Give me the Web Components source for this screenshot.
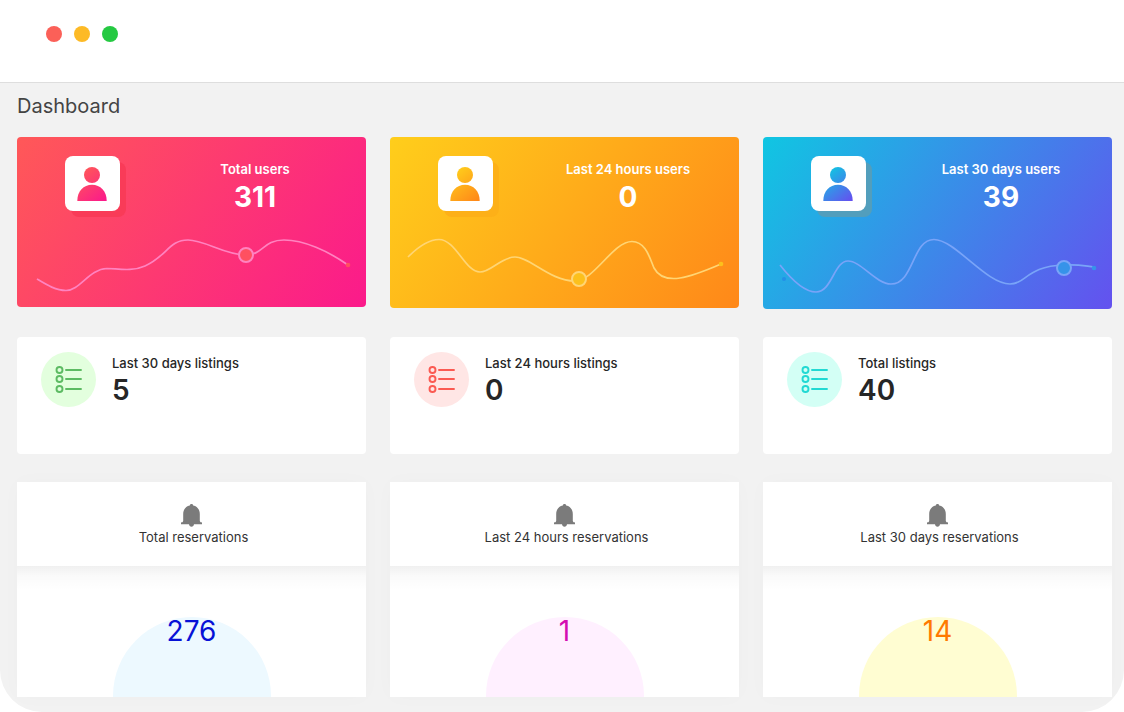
<!DOCTYPE html>
<html lang="en">
<head>
<meta charset="utf-8">
<meta name="viewport" content="width=device-width, initial-scale=1">
<title>Dashboard</title>
<style>
  html { background: #fff; }
  body { margin: 0; font-family: Inter, "Liberation Sans", sans-serif; font-size: 13px; line-height: 20px; color: #262626; }
</style>
</head>
<body>
<window-frame>
  <dash-board heading="Dashboard">
    <user-card tone="red" label="Total users" value="311"></user-card>
    <user-card tone="amber" label="Last 24 hours users" value="0"></user-card>
    <user-card tone="blue" label="Last 30 days users" value="39"></user-card>
    <listing-card tone="green" label="Last 30 days listings" value="5"></listing-card>
    <listing-card tone="red" label="Last 24 hours listings" value="0"></listing-card>
    <listing-card tone="teal" label="Total listings" value="40"></listing-card>
    <reservation-card tone="blue" label="Total reservations" value="276"></reservation-card>
    <reservation-card tone="pink" label="Last 24 hours reservations" value="1"></reservation-card>
    <reservation-card tone="yellow" label="Last 30 days reservations" value="14"></reservation-card>
  </dash-board>
</window-frame>

<script>
class BaseElement extends HTMLElement {
  connectedCallback() {
    if (!this.shadowRoot) this.attachShadow({ mode: "open" }).innerHTML = this.render();
  }
  attr(name) { return this.getAttribute(name) || ""; }
}

customElements.define("window-frame", class extends BaseElement {
  render() {
    return `
    <style>
      :host { display: block; background: #f2f2f2; border-radius: 0 0 42px 42px; overflow: hidden; }
      header { display: flex; gap: 12px; height: 83px; padding: 26px 46px; box-sizing: border-box;
               background: #fff; border-bottom: 1px solid #dedede; }
      .dot { width: 16px; height: 16px; border-radius: 50%; }
      .close { background: #fb6058; }
      .min { background: #fdba26; }
      .max { background: #25c942; }
    </style>
    <header><span class="dot close"></span><span class="dot min"></span><span class="dot max"></span></header>
    <slot></slot>`;
  }
});

customElements.define("dash-board", class extends BaseElement {
  render() {
    return `
    <style>
      :host { display: block; padding: 8px 12px 15px 17px; }
      h1 { margin: 0 0 16px; font-size: 20px; line-height: 30px; font-weight: 400; color: #444; }
      main { display: grid; grid-template-columns: repeat(3, minmax(0, 1fr)); gap: 28px 24px; align-items: start; }
    </style>
    <h1>${this.attr("heading")}</h1>
    <main><slot></slot></main>`;
  }
});

const USER_TONES = {
  red: {
    from: "#ff5858", to: "#fb1a8b", shadow: "#f93b58", line: "#ff83c0", dot: "#ff5060", height: 80,
    path: "M20 52C30 58 39 63.500 49 63.500C63 63.500 72 42 90 41.500C100 41.500 115 45 128 39C150 29 152 13 171 13C188 13 207 28 229 28C246 28 246 13 267 13C287 13 311 24 331 38",
    knob: [229, 28], end: [331, 38]
  },
  amber: {
    from: "#ffce1b", to: "#ff8819", shadow: "#fdb018", line: "#ffd574", dot: "#fcc01c", height: 81,
    path: "M18 30C26 22 38 12.500 49 12.500C66 12.500 75 45 90 45C101 45 111 30 125 30C140 30 160 54 185 54C204 54 223 14.500 242 14.500C256 14.500 260 32 264 41C274 60 301 50 331 37",
    knob: [189, 52], end: [331, 37]
  },
  blue: {
    from: "#10c6e2", to: "#6451ef", shadow: "#529ebc", line: "#79a4f8", dot: "#3693e9", height: 82,
    path: "M17 38C28 52 42 65 53 65C69 65 71 34 85 34C98 34 113 57 128 57C151 57 149 12.500 171 12.500C192 12.500 223 57 247 57C263 57 264 39 301 38C315 37 322 39 331 40",
    knob: [301, 41], end: [331, 41]
  }
};

customElements.define("user-card", class extends BaseElement {
  render() {
    const t = USER_TONES[this.attr("tone")];
    const extra = this.attr("tone") === "blue" ? `<circle cx="21" cy="52" r="2" fill="#238fe8"/>` : "";
    return `
    <style>
      :host { display: block; border-radius: 4px; overflow: hidden; color: #fff;
              background: linear-gradient(125deg, ${t.from}, ${t.to}); }
      .top { display: grid; grid-template-columns: 150fr 176fr; padding: 19px 23px 0 0; height: 90px; box-sizing: border-box; }
      .badge { justify-self: center; display: grid; place-items: center; width: 55px; height: 55px;
               border-radius: 8px; background: #fff; box-shadow: 6px 6px 0 ${t.shadow}; }
      .copy { text-align: center; padding-top: 3px; white-space: nowrap; }
      h2 { margin: 0; font-size: 13px; line-height: 20px; font-weight: 600; }
      p { margin: 0; font-size: 28px; line-height: 36px; font-weight: 700; }
      .badge svg { width: 30px; height: 34px; }
      .chart { display: block; width: 100%; height: ${t.height}px; }
    </style>
    <div class="top">
      <div class="badge">
        <svg viewBox="0 0 30 34" aria-hidden="true">
          <defs><linearGradient id="g" gradientUnits="userSpaceOnUse" x1="3" y1="4" x2="27" y2="34">
            <stop stop-color="${t.from}"/><stop offset="1" stop-color="${t.to}"/></linearGradient></defs>
          <circle cx="15" cy="8" r="8" fill="url(#g)"/>
          <path d="M.3 34C.3 24 6.500 17.700 15 17.700S29.700 24 29.700 34Z" fill="url(#g)"/>
        </svg>
      </div>
      <div class="copy"><h2>${this.attr("label")}</h2><p>${this.attr("value")}</p></div>
    </div>
    <svg class="chart" viewBox="0 0 349 ${t.height}" preserveAspectRatio="none" aria-hidden="true">
      <path d="${t.path}" fill="none" stroke="${t.line}" stroke-width="1.700"/>
      ${extra}
      <circle cx="${t.end[0]}" cy="${t.end[1]}" r="2.300" fill="${t.dot}"/>
      <circle cx="${t.knob[0]}" cy="${t.knob[1]}" r="7" fill="${t.dot}" stroke="${t.line}" stroke-width="2"/>
    </svg>`;
  }
});

const LISTING_TONES = {
  green: ["#e3ffde", "#5dbb63"],
  red: ["#ffe6e5", "#fb5a52"],
  teal: ["#d3fff5", "#22d9d3"]
};

customElements.define("listing-card", class extends BaseElement {
  render() {
    const [bg, ink] = LISTING_TONES[this.attr("tone")];
    return `
    <style>
      :host { display: flex; gap: 16px; min-height: 117px; padding: 15px 24px; box-sizing: border-box;
              border-radius: 4px; background: #fff; }
      svg { flex: none; width: 55px; height: 55px; border-radius: 50%; background: ${bg}; }
      h2 { margin: 0; padding-top: 1px; font-size: 13px; line-height: 20px; font-weight: 500; }
      p { margin: 0; font-size: 28px; line-height: 34px; font-weight: 600; }
    </style>
    <svg viewBox="0 0 55 55" fill="none" stroke="${ink}" stroke-width="1.900" aria-hidden="true">
      <circle cx="18.500" cy="18" r="3"/><circle cx="18.500" cy="27" r="3"/><circle cx="18.500" cy="37" r="3"/>
      <path d="M25 18H40M25 27H40M25 37H40" stroke-linecap="round"/>
    </svg>
    <div><h2>${this.attr("label")}</h2><p>${this.attr("value")}</p></div>`;
  }
});

const RESERVATION_TONES = {
  blue: ["#edf9ff", "#0712d6"],
  pink: ["#fff0ff", "#d40db2"],
  yellow: ["#fffdd2", "#ff7a00"]
};

customElements.define("reservation-card", class extends BaseElement {
  render() {
    const [bg, ink] = RESERVATION_TONES[this.attr("tone")];
    return `
    <style>
      :host { display: block; background: #fff; box-shadow: 0 0 20px rgba(0, 0, 0, .02); text-align: center; }
      header { display: flex; flex-direction: column; align-items: center; height: 84px; padding-top: 22px;
               box-sizing: border-box; }
      svg { width: 21px; height: 23px; }
      h2 { margin: 0; padding-left: 4px; font-size: 13px; line-height: 20px; font-weight: 400; color: #333; }
      .body { display: flex; justify-content: center; height: 131px; padding-top: 51px; box-sizing: border-box; overflow: hidden;
              background: linear-gradient(rgba(0, 0, 0, .06), rgba(0, 0, 0, .02) 10px, transparent 24px); }
      p { flex: none; width: 158px; height: 158px; margin: 0; border-radius: 50%; background: ${bg};
          font-size: 28px; line-height: 28px; font-weight: 400; color: ${ink}; }
    </style>
    <header>
      <svg viewBox="0 0 21 23" fill="#7b7b7b" aria-hidden="true">
        <path d="M10.500 0C11.500 0 12.200.6 12.200 1.500C16.200 2.300 18.800 5.500 18.800 10V17L19.500 18.300H20.500Q21 18.300 21 19V20.300H13C12.800 21.900 11.900 22.800 10.500 22.800S8.200 21.900 8 20.300H0V19Q0 18.300.5 18.300H1.500L2.200 17V10C2.200 5.500 4.800 2.300 8.800 1.500C8.800.6 9.500 0 10.500 0Z"/>
      </svg>
      <h2>${this.attr("label")}</h2>
    </header>
    <div class="body"><p>${this.attr("value")}</p></div>`;
  }
});
</script>
</body>
</html>
